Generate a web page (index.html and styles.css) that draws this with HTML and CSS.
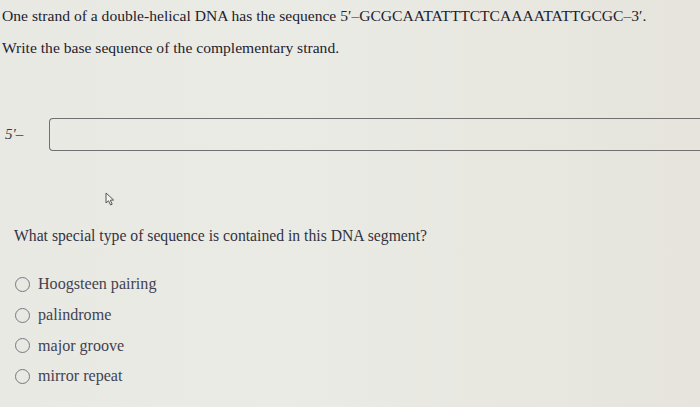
FILE: index.html
```html
<!DOCTYPE html>
<html>
<head>
<meta charset="utf-8">
<link rel="stylesheet" href="styles.css">
</head>
<body>
<div class="page">
  <p class="line first">One strand of a double-helical DNA has the sequence 5′–GCGCAATATTTCTCAAAATATTGCGC–3′.</p>
  <p class="line second">Write the base sequence of the complementary strand.</p>
  <div class="answer-row">
    <span class="prefix">5′–</span>
    <div class="input-box"></div>
  </div>
  <div class="cursor-row">
    <svg class="cursor" width="11" height="14" viewBox="0 0 11 14"><path d="M1 1 L1 11 L3.5 8.8 L5.5 13 L7.2 12.2 L5.3 8.2 L8.6 8 Z" fill="#f4f4f0" stroke="#555" stroke-width="1"/></svg>
  </div>
  <p class="question">What special type of sequence is contained in this DNA segment?</p>
  <ul class="options">
    <li><span class="radio"></span>Hoogsteen pairing</li>
    <li><span class="radio"></span>palindrome</li>
    <li><span class="radio"></span>major groove</li>
    <li><span class="radio"></span>mirror repeat</li>
  </ul>
</div>
</body>
</html>
```
FILE: styles.css
```css
html, body {
  margin: 0;
  padding: 0;
}
body {
  width: 700px;
  height: 407px;
  overflow: hidden;
  background: linear-gradient(90deg, #e9e9e4 0%, #ebebe6 40%, #e8e8e1 70%, #e6e4dc 100%);
  font-family: "Liberation Serif", "Times New Roman", serif;
  color: #22222c;
}
.page {
  padding: 0 0 0 2px;
}
.line {
  margin: 0;
  font-size: 15.6px;
  line-height: 20px;
}
.first {
  padding-top: 6px;
}
.second {
  padding-top: 12px;
}
.answer-row {
  display: flex;
  align-items: center;
  margin-top: 60px;
}
.prefix {
  width: 47px;
  padding-left: 3px;
  box-sizing: border-box;
  font-size: 15px;
  font-style: italic;
  color: #3a3a44;
}
.input-box {
  flex: 1;
  height: 31px;
  border: 1.5px solid #707070;
  border-right: none;
  border-radius: 4px 0 0 4px;
}
.cursor-row {
  height: 40px;
  padding-left: 103px;
  padding-top: 41px;
  box-sizing: border-box;
}
.cursor {
  display: block;
}
.question {
  margin: 34px 0 0 12px;
  font-size: 15.7px;
  line-height: 20px;
  color: #33333f;
}
.options {
  list-style: none;
  margin: 23px 0 0 0;
  padding: 0 0 0 13px;
}
.options li {
  display: flex;
  align-items: center;
  height: 30.7px;
  font-size: 16.1px;
  color: #42424f;
}
.radio {
  width: 15px;
  height: 15px;
  border: 1.5px solid #777882;
  border-radius: 50%;
  margin-right: 8px;
  box-sizing: border-box;
}
```
